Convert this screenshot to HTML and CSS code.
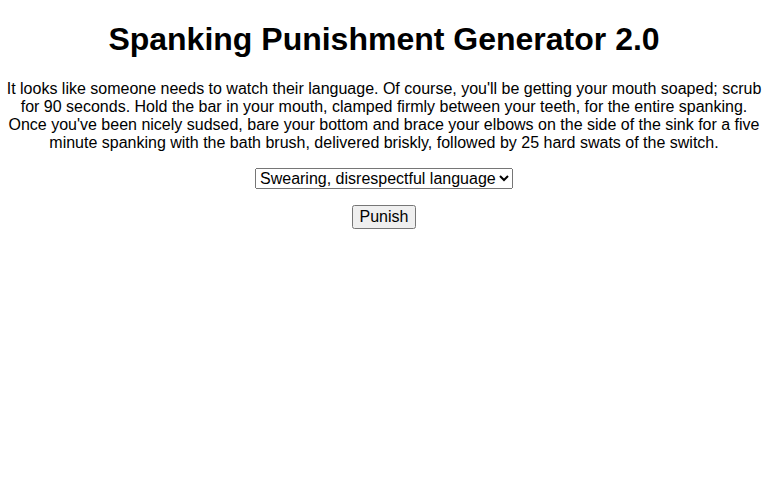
FILE: index.html
```html
<!DOCTYPE html>
<html lang="en">
<head>
<meta charset="utf-8">
<title>Spanking Punishment Generator 2.0</title>
<link rel="stylesheet" href="styles.css">
</head>
<body>
<main class="generator">
  <h1 class="title">Spanking Punishment Generator 2.0</h1>
  <p class="result">It looks like someone needs to watch their language. Of course, you'll be getting your mouth soaped; scrub for 90 seconds. Hold the bar in your mouth, clamped firmly between your teeth, for the entire spanking. Once you've been nicely sudsed, bare your bottom and brace your elbows on the side of the sink for a five minute spanking with the bath brush, delivered briskly, followed by 25 hard swats of the switch.</p>
  <p class="row">
    <select class="offense">
      <option>Swearing, disrespectful language</option>
      <option>Lying</option>
      <option>Being late</option>
    </select>
  </p>
  <p class="row">
    <button class="punish" type="button">Punish</button>
  </p>
</main>
</body>
</html>
```

FILE: styles.css
```css
body {
  margin: 0;
  background: #ffffff;
  color: #000000;
  font-family: "Liberation Sans", Arial, sans-serif;
  font-size: 16px;
}

.generator {
  text-align: center;
}

.title {
  font-size: 32px;
  font-weight: bold;
  margin: 21.44px 0;
}

.result {
  margin: 16px 0;
  line-height: 18px;
}

.row {
  margin: 16px 0;
}

.offense,
.punish {
  font-family: "Liberation Sans", Arial, sans-serif;
  font-size: 16px;
  color: #000000;
}
```
